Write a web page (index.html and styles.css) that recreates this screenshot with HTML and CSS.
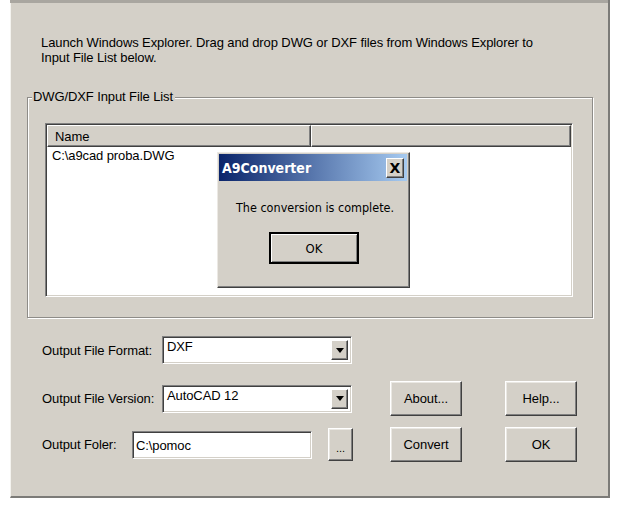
FILE: index.html
```html
<!DOCTYPE html>
<html>
<head>
<meta charset="utf-8">
<link rel="stylesheet" href="styles.css">
</head>
<body>
<div class="window">
  <div class="strip"></div>
  <p class="intro">Launch Windows Explorer. Drag and drop DWG or DXF files from Windows Explorer to<br>Input File List below.</p>
  <div class="group">
    <span class="legend">DWG/DXF Input File List</span>
    <div class="list">
      <div class="list-head">
        <div class="col col-name">Name</div>
        <div class="col col-rest"></div>
      </div>
      <div class="list-body">
        <div class="item">C:\a9cad proba.DWG</div>
      </div>
    </div>
  </div>

  <div class="row row1">
    <span class="label lbl-wide">Output File Format:</span>
    <div class="combo"><span class="combo-text">DXF</span><span class="arrow"><i></i></span></div>
  </div>
  <div class="row row2">
    <span class="label lbl-wide">Output File Version:</span>
    <div class="combo"><span class="combo-text">AutoCAD 12</span><span class="arrow"><i></i></span></div>
    <button class="btn btn-about">About...</button>
    <button class="btn btn-help">Help...</button>
  </div>
  <div class="row row3">
    <span class="label lbl-narrow">Output Foler:</span>
    <div class="textbox">C:\pomoc</div>
    <button class="btn btn-dots">...</button>
    <button class="btn btn-convert">Convert</button>
    <button class="btn btn-ok">OK</button>
  </div>

  <div class="modal">
    <div class="modal-title">
      <span class="modal-caption">A9Converter</span>
      <span class="close">X</span>
    </div>
    <div class="modal-msg">The conversion is complete.</div>
    <div class="modal-actions"><button class="btn modal-ok">OK</button></div>
  </div>
</div>
</body>
</html>
```

FILE: styles.css
```css
html, body {
  margin: 0;
  padding: 0;
  background: #ffffff;
}
body {
  font-family: "Liberation Sans", Arial, sans-serif;
  font-size: 13px;
  letter-spacing: -0.1px;
  color: #000;
}
.window {
  position: relative;
  margin-left: 10px;
  width: 600px;
  height: 498px;
  box-sizing: border-box;
  background: #d4d0c8;
  border-left: 1px solid #f4f3ef;
  border-right: 2px solid #7c7b78;
  border-bottom: 2px solid #7c7b78;
  display: flex;
  flex-direction: column;
}
.strip {
  height: 3px;
  background: #a9a6a0;
  margin-left: -1px;
}
.intro {
  margin: 32px 0 0 30px;
  line-height: 15px;
  height: 30px;
}
.group {
  position: relative;
  margin: 32px 0 0 16px;
  width: 566px;
  height: 221px;
  box-sizing: border-box;
  border: 1px solid #8e8c88;
  box-shadow: inset 1px 1px 0 #ffffff, 1px 1px 0 #ffffff;
  padding: 25px 19px 20px 17px;
}
.legend {
  position: absolute;
  left: 4px;
  top: -9px;
  padding: 0 2px 0 1px;
  background: #d4d0c8;
  line-height: 16px;
}
.list {
  height: 100%;
  box-sizing: border-box;
  border: 1px solid #808080;
  border-right-color: #ffffff;
  border-bottom-color: #ffffff;
  box-shadow: inset 1px 1px 0 #404040, inset -1px -1px 0 #d4d0c8;
  background: #ffffff;
  padding: 1px;
  display: flex;
  flex-direction: column;
}
.list-head {
  display: flex;
  height: 22px;
}
.col {
  box-sizing: border-box;
  background: #d4d0c8;
  border: 1px solid #ffffff;
  border-right-color: #404040;
  border-bottom-color: #404040;
  box-shadow: inset -1px -1px 0 #808080;
  line-height: 21px;
  padding-left: 7px;
}
.col-name { width: 264px; }
.col-rest { flex: 1; }
.list-body {
  flex: 1;
  padding: 1px 5px;
}
.item { line-height: 16px; }

.row {
  display: flex;
  align-items: center;
  padding-left: 31px;
}
.row1 { margin-top: 18px; height: 28px; }
.row2 { margin-top: 17px; height: 35px; }
.row3 { margin-top: 11px; height: 35px; }
.label { flex: none; }
.lbl-wide { width: 120px; }
.lbl-narrow { width: 90px; }

.combo {
  width: 190px;
  height: 28px;
  box-sizing: border-box;
  border: 1px solid #808080;
  border-right-color: #ffffff;
  border-bottom-color: #ffffff;
  box-shadow: inset 1px 1px 0 #404040, inset -1px -1px 0 #d4d0c8;
  background: #fff;
  display: flex;
  align-items: center;
  padding: 2px;
}
.combo-text {
  flex: 1;
  padding-left: 2px;
  align-self: flex-start;
  line-height: 16px;
}
.arrow {
  width: 17px;
  height: 20px;
  box-sizing: border-box;
  background: #d4d0c8;
  border: 1px solid #ffffff;
  border-right-color: #404040;
  border-bottom-color: #404040;
  box-shadow: inset -1px -1px 0 #808080;
  display: flex;
  align-items: center;
  justify-content: center;
  margin-right: 1px;
}
.arrow i {
  width: 0;
  height: 0;
  border-left: 4px solid transparent;
  border-right: 4px solid transparent;
  border-top: 5px solid #000;
}
.textbox {
  width: 180px;
  height: 28px;
  box-sizing: border-box;
  border: 1px solid #808080;
  border-right-color: #ffffff;
  border-bottom-color: #ffffff;
  box-shadow: inset 1px 1px 0 #404040, inset -1px -1px 0 #d4d0c8;
  background: #fff;
  padding: 3px 3px;
  line-height: 22px;
}
.btn {
  font: inherit;
  letter-spacing: inherit;
  color: #000;
  background: #d4d0c8;
  box-sizing: border-box;
  border: 1px solid #ffffff;
  border-right-color: #404040;
  border-bottom-color: #404040;
  box-shadow: inset -1px -1px 0 #808080, inset 1px 1px 0 #eae8e3;
  padding: 0;
  flex: none;
  height: 35px;
  width: 72px;
}
.btn-about { margin-left: 38px; }
.btn-help { margin-left: 43px; }
.btn-dots { width: 25px; height: 33px; margin-left: 16px; font-size: 11px; padding-top: 6px; }
.btn-convert { margin-left: 37px; }
.btn-ok { margin-left: 43px; }

.modal {
  position: absolute;
  left: 206px;
  top: 152px;
  width: 193px;
  height: 136px;
  box-sizing: border-box;
  background: #d4d0c8;
  border: 1px solid #ece9e4;
  border-right-color: #404040;
  border-bottom-color: #404040;
  box-shadow: inset -1px -1px 0 #808080;
  padding: 1px 2px 2px 1px;
  display: flex;
  flex-direction: column;
  font-family: "DejaVu Sans Condensed", "DejaVu Sans", sans-serif;
  letter-spacing: 0;
}
.modal-title {
  height: 27px;
  background: linear-gradient(to right, #0a246a, #a6caf0);
  display: flex;
  align-items: center;
  justify-content: space-between;
  padding: 0 3px 0 3px;
}
.modal-caption {
  color: #fff;
  font-weight: bold;
  font-size: 14px;
}
.close {
  width: 18px;
  height: 20px;
  box-sizing: border-box;
  background: #d4d0c8;
  border: 1px solid #ffffff;
  border-right-color: #404040;
  border-bottom-color: #404040;
  box-shadow: inset -1px -1px 0 #808080;
  display: flex;
  align-items: center;
  justify-content: center;
  font-size: 14px;
  font-weight: bold;
  font-family: "DejaVu Sans", sans-serif;
  line-height: 1;
}
.modal-msg {
  text-align: center;
  font-size: 12.5px;
  margin-top: 19px;
  line-height: 16px;
  padding-left: 4px;
}
.modal-actions {
  display: flex;
  justify-content: center;
  margin-top: 16px;
}
.modal-ok {
  width: 90px;
  height: 32px;
  border: 2px solid #000;
  box-shadow: inset 1px 1px 0 #ffffff, inset -1px -1px 0 #808080;
  font-family: "DejaVu Sans Condensed", "DejaVu Sans", sans-serif;
  font-size: 13px;
  margin-left: 2px;
}
```
